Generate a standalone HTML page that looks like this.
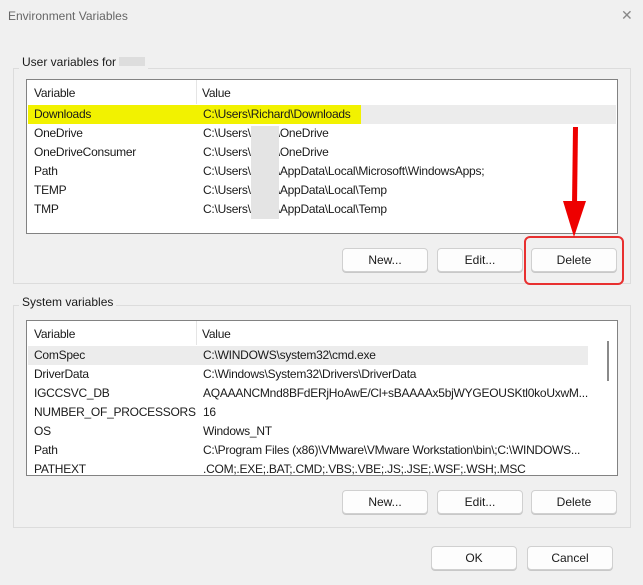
<!DOCTYPE html>
<html><head><style>
body{margin:0;width:643px;height:585px;background:#f0f0f0;font-family:"Liberation Sans",sans-serif;font-size:12px;color:#1a1a1a;position:relative;overflow:hidden}
.a{position:absolute}
.grp{position:absolute;border:1px solid #dcdcdc;}
.lbl{position:absolute;background:#f0f0f0;padding:0 3px;}
.list{position:absolute;background:#fff;border:1px solid #828282;overflow:hidden;letter-spacing:-0.25px}
.hdr{position:absolute;left:0;right:0;top:0;height:24px;}
.hdr span{position:absolute;top:6px}
.div{position:absolute;left:169px;top:0;width:1px;height:24px;background:#e5e5e5}
.row{position:absolute;left:1px;height:19px;line-height:19px}
.row .c1{position:absolute;left:6px}
.row .c2{position:absolute;left:175px;white-space:nowrap}
.btn{position:absolute;width:84px;height:22px;border:1px solid #d0d0d0;border-radius:4px;background:#fdfdfd;text-align:center;line-height:22px;box-shadow:0 1px 0 #c8c8c8}
.blur{position:absolute;background:#e4e4e4;width:28px}
.sp{display:inline-block;width:26px}
</style></head><body>
<div class="a" style="left:8px;top:9px;color:#666">Environment Variables</div>
<div class="a" style="left:621px;top:7px;font-size:14px;color:#888">✕</div>

<div class="grp" style="left:13px;top:68px;width:616px;height:214px"></div>
<div class="lbl" style="left:19px;top:55px">User variables for <span style="display:inline-block;width:26px;height:9px;background:#ddd"></span></div>
<div class="list" style="left:26px;top:79px;width:590px;height:153px">
 <div class="hdr"><span style="left:7px">Variable</span><div class="div"></div><span style="left:175px">Value</span></div>
 <div class="row" style="top:25px;width:588px;background:#ececec"></div>
 <div class="row" style="top:25px;width:333px;background:#f2f200"></div>
 <div class="row" style="top:25px"><span class="c1">Downloads</span><span class="c2">C:\Users\Richard\Downloads</span></div>
 <div class="row" style="top:44px"><span class="c1">OneDrive</span><span class="c2">C:\Users\<span class="sp"></span>\OneDrive</span></div>
 <div class="row" style="top:63px"><span class="c1">OneDriveConsumer</span><span class="c2">C:\Users\<span class="sp"></span>\OneDrive</span></div>
 <div class="row" style="top:82px"><span class="c1">Path</span><span class="c2">C:\Users\<span class="sp"></span>\AppData\Local\Microsoft\WindowsApps;</span></div>
 <div class="row" style="top:101px"><span class="c1">TEMP</span><span class="c2">C:\Users\<span class="sp"></span>\AppData\Local\Temp</span></div>
 <div class="row" style="top:120px"><span class="c1">TMP</span><span class="c2">C:\Users\<span class="sp"></span>\AppData\Local\Temp</span></div>
 <div class="blur" style="left:224px;top:46px;height:93px"></div>
</div>
<div class="btn" style="left:342px;top:248px">New...</div>
<div class="btn" style="left:437px;top:248px">Edit...</div>
<div class="btn" style="left:531px;top:248px">Delete</div>
<div class="a" style="left:524px;top:236px;width:96px;height:45px;border:2px solid #e83030;border-radius:6px"></div>
<svg class="a" style="left:555px;top:125px" width="40" height="115"><path d="M18 2 L23 2 L22 80 L17 80 Z" fill="#e00"/><path d="M8 76 L31 76 L19 112 Z" fill="#e00"/></svg>

<div class="grp" style="left:13px;top:305px;width:616px;height:221px"></div>
<div class="lbl" style="left:19px;top:295px">System variables</div>
<div class="list" style="left:26px;top:320px;width:590px;height:154px">
 <div class="hdr"><span style="left:7px">Variable</span><div class="div"></div><span style="left:175px">Value</span></div>
 <div class="row" style="top:25px;width:560px;background:#ececec"></div>
 <div class="row" style="top:25px"><span class="c1">ComSpec</span><span class="c2">C:\WINDOWS\system32\cmd.exe</span></div>
 <div class="row" style="top:44px"><span class="c1">DriverData</span><span class="c2">C:\Windows\System32\Drivers\DriverData</span></div>
 <div class="row" style="top:63px"><span class="c1">IGCCSVC_DB</span><span class="c2">AQAAANCMnd8BFdERjHoAwE/Cl+sBAAAAx5bjWYGEOUSKtl0koUxwM...</span></div>
 <div class="row" style="top:82px"><span class="c1">NUMBER_OF_PROCESSORS</span><span class="c2">16</span></div>
 <div class="row" style="top:101px"><span class="c1">OS</span><span class="c2">Windows_NT</span></div>
 <div class="row" style="top:120px"><span class="c1">Path</span><span class="c2">C:\Program Files (x86)\VMware\VMware Workstation\bin\;C:\WINDOWS...</span></div>
 <div class="row" style="top:139px"><span class="c1">PATHEXT</span><span class="c2">.COM;.EXE;.BAT;.CMD;.VBS;.VBE;.JS;.JSE;.WSF;.WSH;.MSC</span></div>
 <div class="a" style="left:580px;top:20px;width:2px;height:40px;background:#8a8a8a"></div>
</div>
<div class="btn" style="left:342px;top:490px">New...</div>
<div class="btn" style="left:437px;top:490px">Edit...</div>
<div class="btn" style="left:531px;top:490px">Delete</div>
<div class="btn" style="left:431px;top:546px">OK</div>
<div class="btn" style="left:527px;top:546px">Cancel</div>
</body></html>
